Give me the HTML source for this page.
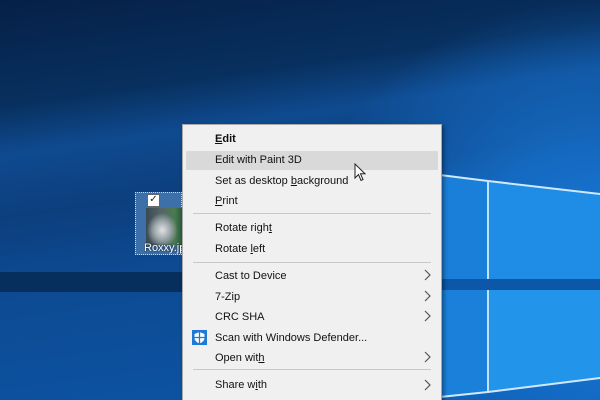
<!DOCTYPE html>
<html><head><style>
html,body{margin:0;width:600px;height:400px;overflow:hidden;}
body{position:relative;font-family:"Liberation Sans",sans-serif;}
.bg{position:absolute;inset:0;background:linear-gradient(172deg,#052048 0%,#08305f 22%,#0f4a8f 32%,#0c3f7e 45%,#0d4a92 60%,#0c56a8 100%);}
.bg2{position:absolute;inset:0;background:radial-gradient(ellipse 300px 260px at 600px 260px,rgba(24,120,215,1) 0,rgba(24,120,215,.7) 45%,rgba(24,120,215,0) 100%);}
.menu{position:absolute;left:182px;top:124px;width:258px;height:290px;background:#f0f0f0;border:1px solid #a8a8a8;box-shadow:2px 2px 4px rgba(0,0,0,.4);}
.it{position:absolute;left:32px;font-size:11px;color:#111;}
.sep{position:absolute;left:10px;width:238px;height:1px;background:#c8c8c8;}
.arr{position:absolute;left:241px;}
u{text-decoration:underline;}
</style></head><body>
<div class="bg"></div>
<div class="bg2"></div>
<svg width="600" height="400" style="position:absolute;left:0;top:0">
<polygon points="488,182 600,195 600,279 488,279" fill="#1f8de5"/>
<polygon points="488,290 600,290 600,378 488,392" fill="#2294ea"/>
<polygon points="440,290 488,290 488,392 440,397" fill="#1a80da"/>
<polygon points="440,176 488,182 488,279 440,279" fill="#1a7fd8"/>
<rect x="0" y="272" width="182" height="20" fill="#062f5e"/>
<rect x="440" y="279" width="160" height="11" fill="#0d57a8"/>
<polyline points="440,175 488,181 600,194" stroke="#cfeaff" stroke-width="2" fill="none"/>
<line x1="488" y1="181" x2="488" y2="279" stroke="#bfe2ff" stroke-width="2"/>
<line x1="488" y1="290" x2="488" y2="392" stroke="#bfe2ff" stroke-width="2"/>
<polyline points="440,397 488,392 600,378" stroke="#cfeaff" stroke-width="2" fill="none"/>
</svg>
<div style="position:absolute;left:135px;top:192px;width:47px;height:63px;background:#3d6fa8;border:1px dotted #c8d8ea;box-sizing:border-box"></div>
<div style="position:absolute;left:147px;top:194px;width:11px;height:11px;background:#fff;border:1px solid #666;font-size:10px;line-height:10px;text-align:center;color:#222">✓</div>
<div style="position:absolute;left:146px;top:208px;width:36px;height:37px;background:radial-gradient(ellipse at 45% 60%,#e0e2e4 0,#9aa4a8 30%,transparent 55%),linear-gradient(90deg,#3a4a52,#56646a 40%,#4a7a50 80%,#2a5a3a)"></div>
<div style="position:absolute;left:144px;top:242px;font-size:11px;color:#fff;text-shadow:0 0 2px #000;width:38px;overflow:hidden;white-space:nowrap">Roxxy.jpg</div>
<div class="menu">
<div style="position:absolute;left:3px;top:26px;width:252px;height:19px;background:#d9d9d9"></div>
<div class="it" style="top:8px;font-weight:bold"><u>E</u>dit</div>
<div class="it" style="top:29px">Edit with Paint 3D</div>
<div class="it" style="top:50px">Set as desktop <u>b</u>ackground</div>
<div class="it" style="top:70px"><u>P</u>rint</div>
<div class="sep" style="top:88px"></div>
<div class="it" style="top:97px">Rotate righ<u>t</u></div>
<div class="it" style="top:118px">Rotate <u>l</u>eft</div>
<div class="sep" style="top:137px"></div>
<div class="it" style="top:145px">Cast to Device</div>
<div class="it" style="top:166px">7-Zip</div>
<div class="it" style="top:186px">CRC SHA</div>
<div class="it" style="top:207px">Scan with Windows Defender...</div>
<div class="it" style="top:227px">Open wit<u>h</u></div>
<div class="sep" style="top:244px"></div>
<div class="it" style="top:254px">Share w<u>i</u>th</div>
<svg class="arr" style="top:144px" width="8" height="120"><g stroke="#555" stroke-width="1.2" fill="none">
<path d="M1 1 L6 6 L1 11"/><path d="M1 22 L6 27 L1 32"/><path d="M1 42 L6 47 L1 52"/><path d="M1 83 L6 88 L1 93"/></g></svg>
<svg class="arr" style="top:254px" width="8" height="14"><path d="M1 1 L6 6 L1 11" stroke="#555" stroke-width="1.2" fill="none"/></svg>
<svg style="position:absolute;left:9px;top:205px" width="15" height="15"><rect width="15" height="15" fill="#1e7ad4"/><path d="M7.5 2 L12.5 4 V8 Q12.5 11.5 7.5 13.5 Q2.5 11.5 2.5 8 V4 Z" fill="#fff"/><path d="M7.5 2V13.5M2.5 7.5H12.5" stroke="#1e7ad4" stroke-width="1.3"/></svg>
</div>
<svg style="position:absolute;left:354px;top:163px" width="14" height="20"><path d="M1 1 L1 15 L4.5 11.5 L7 17.5 L9 16.5 L6.5 10.8 L11 10.8 Z" fill="#fff" stroke="#222" stroke-width="1"/></svg>
</body></html>
